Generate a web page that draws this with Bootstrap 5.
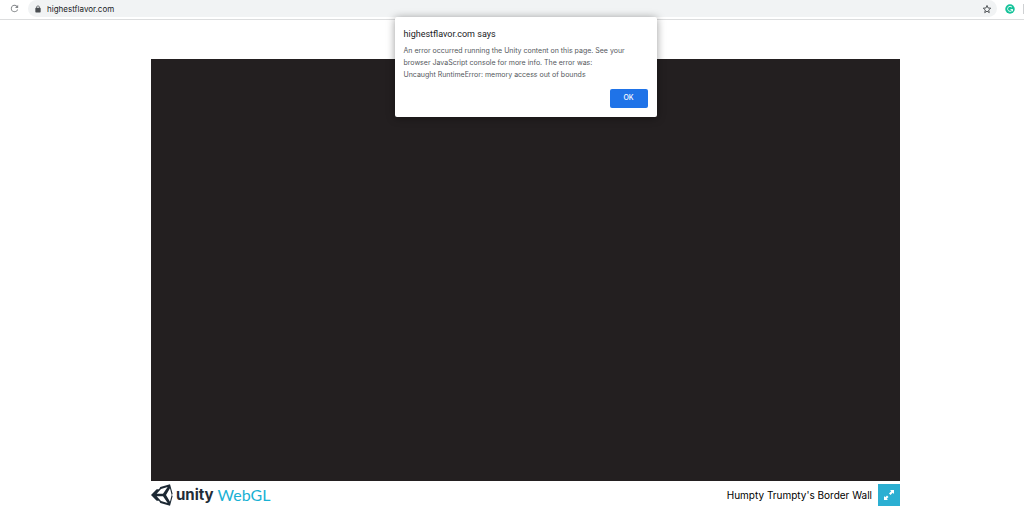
<!DOCTYPE html>
<html lang="en">
<head>
<meta charset="utf-8">
<meta name="viewport" content="width=device-width, initial-scale=1">
<title>highestflavor.com</title>
<link href="https://cdn.jsdelivr.net/npm/bootstrap@5.3.0/dist/css/bootstrap.min.css" rel="stylesheet">
<style>
  body { font-family: Inter, "Liberation Sans", sans-serif; background: #fff; }
  svg { display: block; }
  .toolbar { height: 20px; padding: 0 0 2px 9px; border-bottom: 1px solid #dcddde; gap: 8px; }
  .icon-btn { color: #5f6368; line-height: 1; }
  .address { background: #f1f3f4; border-radius: 9px; height: 17px; padding: 0 5px 0 6px; gap: 5px; }
  .address input { font-size: 8px; line-height: 12px; color: #202124; outline: 0; min-width: 0; }
  .toolbar-end { width: 19px; }
  .stage { margin: 39px 124px 0 151px; }
  .game { display: block; width: 100%; aspect-ratio: 749 / 422; background: #231f20; }
  .footer-bar { padding-top: 3px; }
  .brand { gap: 3px; color: #222c37; text-decoration: none; }
  .brand-name { font: 700 15px/20px Inter, sans-serif; }
  .brand-kind { font: 400 16px/20px Lato, sans-serif; color: #19b1d4; }
  .title-group { gap: 6px; }
  .game-title { font: 10px/14px Inter, "Liberation Sans", sans-serif; color: #000; }
  .expand { width: 22px; height: 22px; background: #2bafd2; color: #fff; }
  .alert-box { top: -42px; left: 50%; width: 262px; margin-left: -131px; padding: 11px 9px 9px 9px; border-radius: 2px; box-shadow: 0 1px 9px rgba(0,0,0,.4); }
  .alert-box h1 { font: 400 9px/12px Roboto, sans-serif; color: #202124; margin-bottom: 5px; }
  .alert-box p { font-size: 7px; line-height: 12px; color: #54585c; }
  .ok { width: 38px; height: 19px; font-size: 7px; font-weight: 500; border-radius: 2px; background: #1f73e8; color: #fff; }
</style>
</head>
<body>
<header class="toolbar d-flex align-items-center">
  <button class="icon-btn btn p-0 border-0" aria-label="Reload">
    <svg width="11" height="11" viewBox="0 0 24 24" fill="#85888b"><path d="M17.65 6.35A8 8 0 1 0 19.73 14h-2.08A6 6 0 1 1 12 6c1.66 0 3.14.69 4.22 1.78L13 11h7V4z"/></svg>
  </button>
  <div class="address d-flex align-items-center flex-grow-1">
    <svg width="8" height="8" viewBox="0 0 24 24" fill="#4b4f53" aria-hidden="true"><path d="M18 8.500h-1V6.500a5 5 0 0 0-10 0v2H6a2 2 0 0 0-2 2v10a2 2 0 0 0 2 2h12a2 2 0 0 0 2-2v-10a2 2 0 0 0-2-2zM9 6.500a3 3 0 0 1 6 0v2H9z"/></svg>
    <input class="border-0 bg-transparent p-0 flex-grow-1" type="text" aria-label="Address" value="highestflavor.com">
    <button class="icon-btn btn p-0 border-0" aria-label="Bookmark this page">
      <svg width="10" height="10" viewBox="0 0 24 24" fill="none" stroke="#4b4f53" stroke-width="2.300"><path d="M12 3.500l2.500 6 6.500.6-5 4.300 1.500 6.300-5.500-3.400-5.500 3.400L8 14.400l-5-4.300 6.500-.6z"/></svg>
    </button>
  </div>
  <div class="toolbar-end d-flex align-items-center justify-content-between">
    <button class="icon-btn btn p-0 border-0" aria-label="Writing assistant">
      <svg width="10" height="10" viewBox="0 0 20 20" fill="none"><circle cx="10" cy="10" r="9.500" fill="#15c39a"/><path d="M14 6.500A5 5 0 1 0 15 11h-4M15 11v3.500" stroke="#fff" stroke-width="1.800"/></svg>
    </button>
    <svg width="1" height="10" aria-hidden="true"><path d="M0 0h1v10H0z" fill="#cfd1d3"/></svg>
  </div>
</header>
<main class="stage position-relative">
  <canvas class="game" aria-label="Game"></canvas>
  <footer class="footer-bar d-flex align-items-center justify-content-between mb-3">
    <a class="brand d-flex align-items-center" href="#" aria-label="Unity WebGL">
      <svg width="22" height="22" viewBox="0 0 66 66" fill="#1c2833"><path fill-rule="evenodd" d="M57 1L65 30 62 33 65 36 57 65 28 57 24 50H17L0 33 17 16h7l4-7zM50 9L30 15 17 29H36zM57 13L45 33l12 20 5-20zM17 37l13 14 20 6-14-20z"/></svg>
      <span class="d-flex align-items-center gap-1">
        <span class="brand-name">unity</span>
        <span class="brand-kind">WebGL</span>
      </span>
    </a>
    <div class="title-group d-flex align-items-center">
      <span class="game-title">Humpty Trumpty's Border Wall</span>
      <button class="expand btn rounded-0 border-0 p-0 d-flex align-items-center justify-content-center" aria-label="Fullscreen">
        <svg width="10" height="10" viewBox="0 0 20 20" fill="#fff"><path d="M12 0h8v8l-2.500-2.500-4.500 4.500-3-3 4.500-4.500zM8 20H0v-8l2.500 2.500L6 11l3 3-3.500 3.500z"/></svg>
      </button>
    </div>
  </footer>
  <section class="alert-box position-absolute bg-white" role="alertdialog" aria-labelledby="says" aria-describedby="message">
    <h1 id="says">highestflavor.com says</h1>
    <p id="message" class="mb-2">An error occurred running the Unity content on this page. See your<br>browser JavaScript console for more info. The error was:<br>Uncaught RuntimeError: memory access out of bounds</p>
    <div class="d-flex justify-content-end"><button class="ok btn border-0 p-0">OK</button></div>
  </section>
</main>
<script src="https://cdn.jsdelivr.net/npm/bootstrap@5.3.0/dist/js/bootstrap.bundle.min.js"></script>
</body>
</html>
